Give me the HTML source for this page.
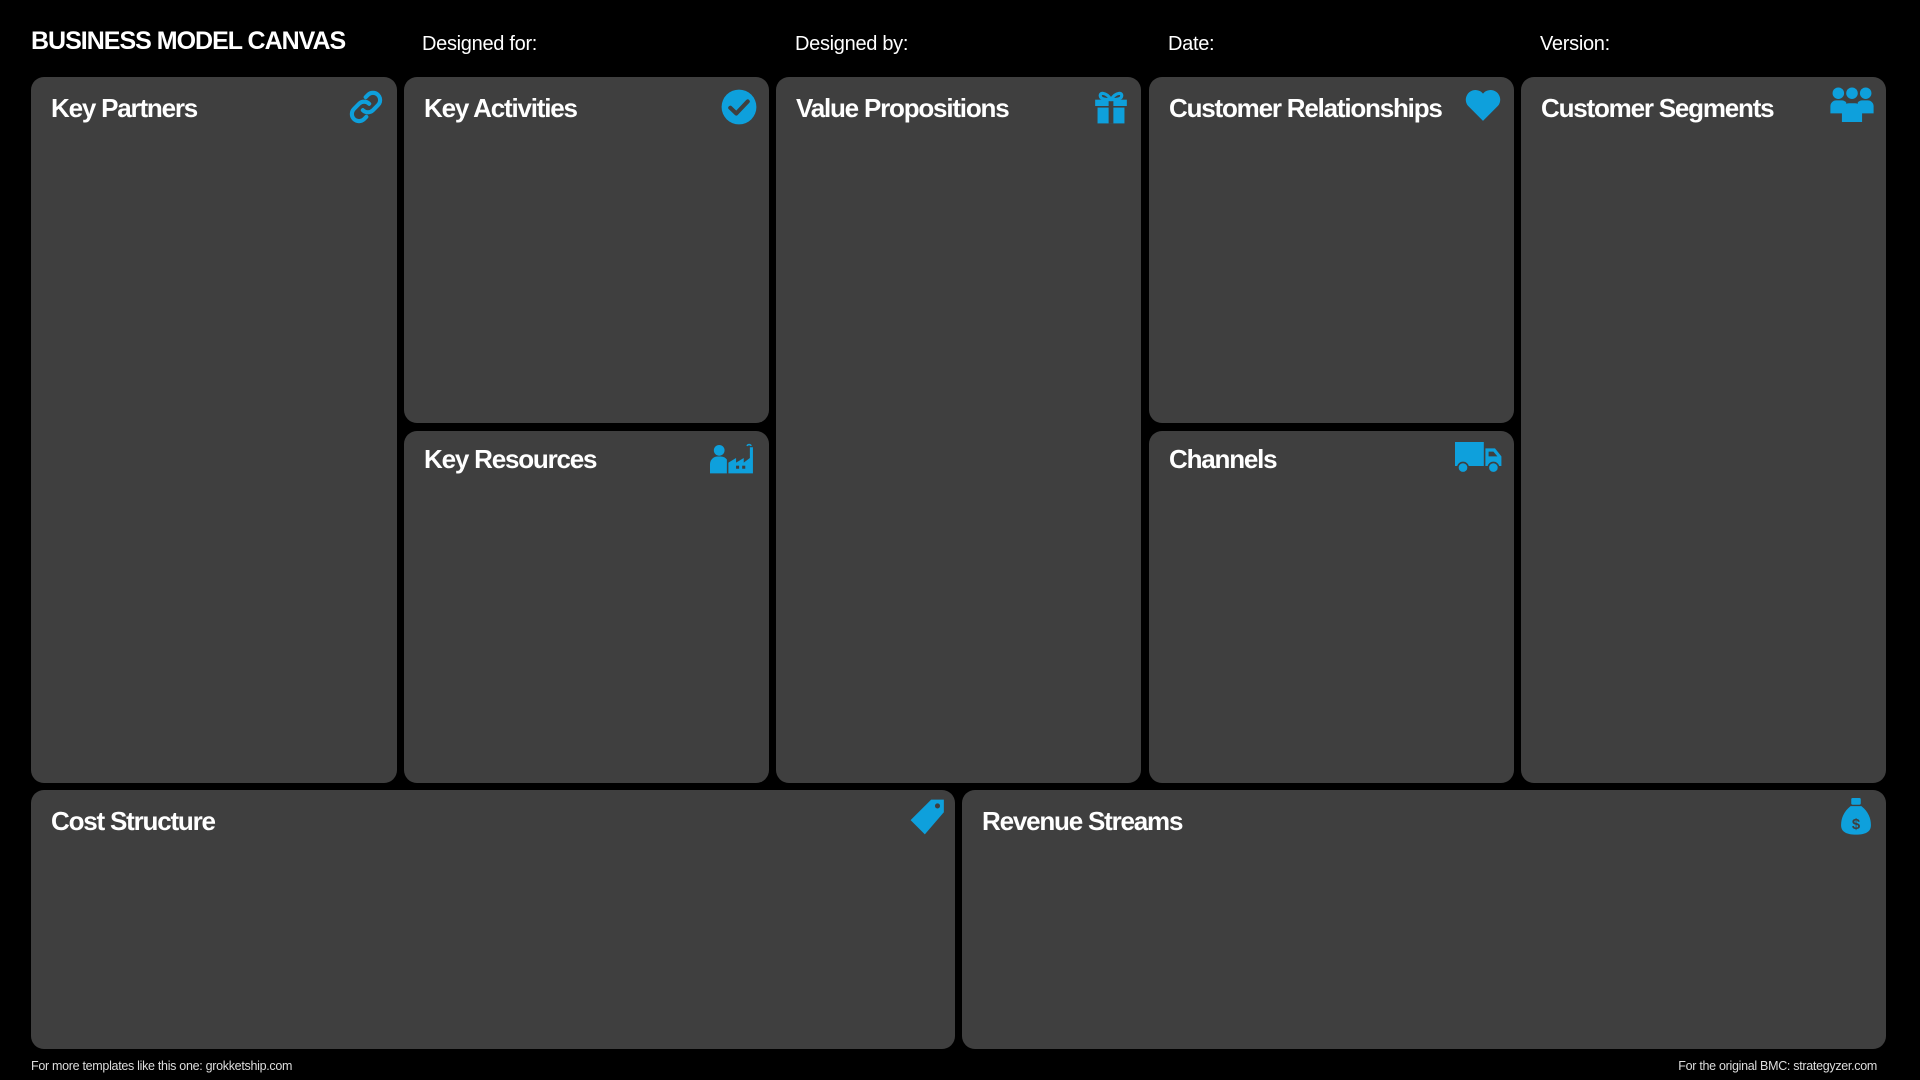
<!DOCTYPE html>
<html><head><meta charset="utf-8"><style>
*{margin:0;padding:0;box-sizing:border-box}
body{width:1920px;height:1080px;background:#000;position:relative;overflow:hidden;font-family:"Liberation Sans",Arial,sans-serif;color:#fff}
.c{position:absolute;background:#3f3f3f;border-radius:13px}
.t{position:absolute;left:20px;top:16px;font-size:26px;font-weight:bold;letter-spacing:-1.2px}
.i{position:absolute;width:38px;height:38px}
.h{position:absolute;top:33px;font-size:20px;letter-spacing:-0.3px}
.f{position:absolute;top:1059px;font-size:12.5px;color:#ddd;letter-spacing:-0.3px}
</style></head><body>
<div style="position:absolute;left:31px;top:27px;font-size:25px;font-weight:bold;letter-spacing:-1px">BUSINESS MODEL CANVAS</div>
<div class="h" style="left:422px">Designed for:</div>
<div class="h" style="left:795px">Designed by:</div>
<div class="h" style="left:1168px">Date:</div>
<div class="h" style="left:1540px">Version:</div>

<div class="c" style="left:31px;top:77px;width:366px;height:706px"><div class="t">Key Partners</div>
<svg class="i" style="left:316px;top:11px" viewBox="0 0 24 24" fill="none" stroke="#0ea0dc" stroke-width="2.6" stroke-linecap="round"><path d="M10 14a4.5 4.5 0 0 0 6.4 0l3.2-3.2a4.5 4.5 0 0 0-6.4-6.4l-1.4 1.4"/><path d="M14 10a4.5 4.5 0 0 0-6.4 0l-3.2 3.2a4.5 4.5 0 0 0 6.4 6.4l1.4-1.4"/></svg></div>

<div class="c" style="left:404px;top:77px;width:365px;height:346px"><div class="t">Key Activities</div>
<svg class="i" style="left:316px;top:11px" viewBox="0 0 24 24"><circle cx="12" cy="12" r="11" fill="#0ea0dc"/><path d="M6.5 12.5l3.8 3.6 7.2-7.6" fill="none" stroke="#3f3f3f" stroke-width="2.6" stroke-linecap="round" stroke-linejoin="round"/></svg></div>

<div class="c" style="left:404px;top:431px;width:365px;height:352px"><div class="t" style="top:13px">Key Resources</div>
<svg class="i" style="left:306px;top:8px;width:46px" viewBox="0 0 30 24" fill="#0ea0dc"><circle cx="6" cy="7" r="3.5"/><path d="M0 22v-6a5 5 0 0 1 5-5h2a5 5 0 0 1 4 2v9z"/><path d="M12 22v-7l5-3v3l5-3v3l4-3V5h2v17z"/><path d="M24 4c1-1 2-1 3 0" stroke="#0ea0dc" fill="none"/><rect x="17" y="17" width="2" height="2" fill="#3f3f3f"/><rect x="21" y="17" width="2" height="2" fill="#3f3f3f"/></svg></div>

<div class="c" style="left:776px;top:77px;width:365px;height:706px"><div class="t">Value Propositions</div>
<svg class="i" style="left:316px;top:10px" viewBox="0 0 24 24" fill="#0ea0dc"><rect x="2" y="8" width="20" height="4"/><rect x="3.5" y="13" width="17" height="10"/><rect x="10.5" y="8" width="3" height="15" fill="#3f3f3f"/><path d="M12 8C9 3 4 3 5.5 6.5 6.5 8 10 8 12 8zM12 8c3-5 8-5 6.5-1.5C17.5 8 14 8 12 8z" fill="none" stroke="#0ea0dc" stroke-width="2"/></svg></div>

<div class="c" style="left:1149px;top:77px;width:365px;height:346px"><div class="t">Customer Relationships</div>
<svg class="i" style="left:315px;top:9px" viewBox="0 0 24 24" fill="#0ea0dc"><path d="M12 22L2.5 12.5A5.6 5.6 0 0 1 12 4.8a5.6 5.6 0 0 1 9.5 7.7z"/></svg></div>

<div class="c" style="left:1149px;top:431px;width:365px;height:352px"><div class="t" style="top:13px">Channels</div>
<svg class="i" style="left:306px;top:8px;width:48px" viewBox="0 0 30 22" fill="#0ea0dc"><rect x="0" y="1" width="18" height="15"/><path d="M19 5h6l4 5v6H19z"/><path d="M21 7h3l2.5 3H21z" fill="#3f3f3f"/><circle cx="5" cy="17" r="3.2" stroke="#3f3f3f" stroke-width="1"/><circle cx="24" cy="17" r="3.2" stroke="#3f3f3f" stroke-width="1"/></svg></div>

<div class="c" style="left:1521px;top:77px;width:365px;height:706px"><div class="t">Customer Segments</div>
<svg class="i" style="left:309px;top:9px;width:44px;height:36px" viewBox="0 0 30 25" fill="#0ea0dc"><circle cx="5.5" cy="5" r="4"/><circle cx="15" cy="5" r="4"/><circle cx="24.5" cy="5" r="4"/><path d="M0 19v-5a4 4 0 0 1 4-4h4a4 4 0 0 1 3 1.5V19z"/><path d="M30 19v-5a4 4 0 0 0-4-4h-4a4 4 0 0 0-3 1.5V19z"/><path d="M8 25v-8a5 5 0 0 1 5-5h4a5 5 0 0 1 5 5v8z"/></svg></div>

<div class="c" style="left:31px;top:790px;width:924px;height:259px"><div class="t">Cost Structure</div>
<svg class="i" style="left:878px;top:8px" viewBox="0 0 24 24" fill="#0ea0dc"><path d="M14 1h8v8L10 23 1 14z"/><circle cx="18" cy="5" r="1.6" fill="#3f3f3f"/></svg></div>

<div class="c" style="left:962px;top:790px;width:924px;height:259px"><div class="t">Revenue Streams</div>
<svg class="i" style="left:875px;top:8px" viewBox="0 0 24 28" fill="#0ea0dc"><rect x="8.5" y="0" width="7" height="5" rx="1"/><path d="M8 6h8c5 4 7 9 7 14 0 5-4 7-11 7S1 25 1 20c0-5 2-10 7-14z"/><text x="12" y="23" font-size="11" font-family="Liberation Sans" text-anchor="middle" fill="#3f3f3f" font-weight="bold">$</text></svg></div>

<div class="f" style="left:31px">For more templates like this one: grokketship.com</div>
<div class="f" style="right:43px">For the original BMC: strategyzer.com</div>
</body></html>
